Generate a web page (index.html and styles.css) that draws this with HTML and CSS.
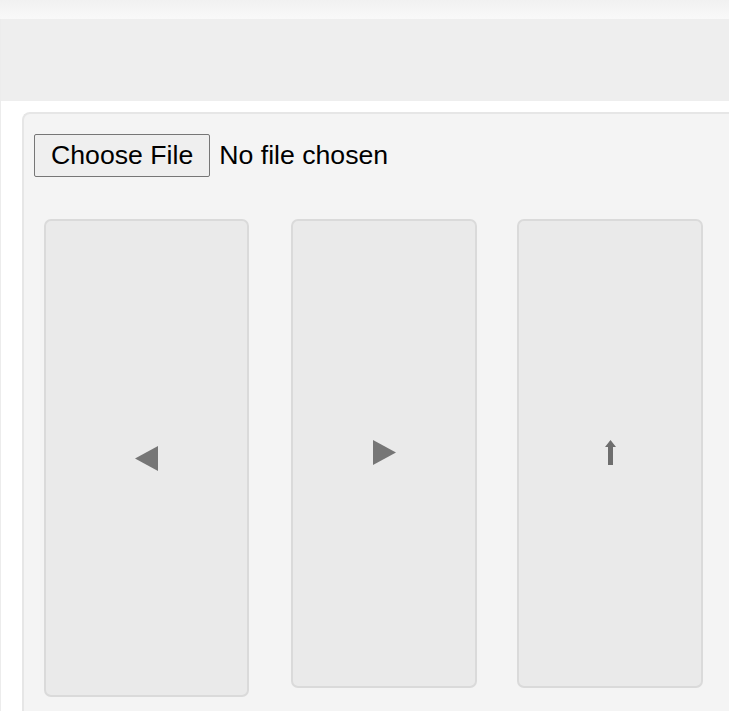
FILE: index.html
```html
<!DOCTYPE html>
<html>
<head>
<meta charset="utf-8">
<link rel="stylesheet" href="styles.css">
</head>
<body>
<div class="topbar"></div>
<div class="main">
  <div class="header"></div>
  <div class="content">
    <div class="panel">
      <input class="file" type="file">
      <div class="cards">
        <div class="card card-wide">
          <svg width="23" height="25" viewBox="0 0 23 25"><polygon points="23,0 23,25 0,12.5" fill="#767676"/></svg>
        </div>
        <div class="card">
          <svg class="icon-right" width="23" height="25" viewBox="0 0 23 25"><polygon points="0,0 0,25 23,12.5" fill="#767676"/></svg>
        </div>
        <div class="card">
          <svg class="icon-up" width="11" height="25" viewBox="0 0 11 25"><polygon points="5.5,0 11,7 8,7 8,25 3,25 3,7 0,7" fill="#6e6e6e"/></svg>
        </div>
      </div>
    </div>
  </div>
</div>
</body>
</html>
```
FILE: styles.css
```css
html, body {
  margin: 0;
  padding: 0;
  background: #ffffff;
  overflow: hidden;
  height: 711px;
  font-family: "Liberation Sans", Arial, sans-serif;
}
.topbar {
  height: 19px;
  background: linear-gradient(#f1f1f1, #f9f9f9);
}
.main {
  border-left: 1px solid #ececec;
  height: 692px;
  overflow: hidden;
}
.header {
  height: 82px;
  background: #eeeeee;
}
.content {
  padding: 11px 0 0 21px;
}
.panel {
  height: 599px;
  background: #f4f4f4;
  border-top: 2px solid #e6e6e6;
  border-left: 2px solid #e6e6e6;
  border-top-left-radius: 8px;
  padding: 20px 0 0 10px;
  box-sizing: border-box;
  overflow: hidden;
}
.file {
  display: block;
  font-family: "Liberation Sans", Arial, sans-serif;
  font-size: 26.67px;
  color: #000;
  height: 43px;
  line-height: 43px;
}
.file::file-selector-button {
  font-family: "Liberation Sans", Arial, sans-serif;
  font-size: 26.67px;
  height: 43px;
  padding: 0 16px;
  margin: 0 9px 0 0;
  border: 1px solid #767676;
  border-radius: 2px;
  background: #efefef;
  color: #000;
}
.cards {
  display: flex;
  align-items: flex-start;
  gap: 42px;
  margin-top: 42px;
  padding-left: 10px;
}
.card {
  flex: none;
  width: 186px;
  height: 469px;
  box-sizing: border-box;
  background: #eaeaea;
  border: 2px solid #dadada;
  border-radius: 7px;
  display: flex;
  align-items: center;
  justify-content: center;
}
.card + .card + .card {
  margin-left: -2px;
}
.card-wide {
  width: 205px;
  height: 478px;
}
.icon-right {
  margin-top: -3px;
}
.icon-up {
  margin-top: -3px;
}
```
